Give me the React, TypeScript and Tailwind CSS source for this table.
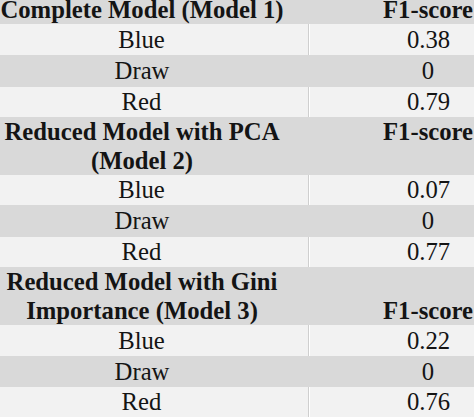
type Row = { label: string; score: string };

type Section = {
    title: string[];
    scoreAlign: 'top' | 'bottom';
    headerHeight: string;
    rows: Row[];
    rowHeights: string[];
};

const sections: Section[] = [
    {
        title: ['Complete Model (Model 1)'],
        scoreAlign: 'top',
        headerHeight: 'h-[24px] leading-[20px]',
        rows: [
            { label: 'Blue', score: '0.38' },
            { label: 'Draw', score: '0' },
            { label: 'Red', score: '0.79' },
        ],
        rowHeights: ['h-[31px]', 'h-[32px]', 'h-[30px]'],
    },
    {
        title: ['Reduced Model with PCA', '(Model 2)'],
        scoreAlign: 'top',
        headerHeight: 'h-[58px] leading-[29px]',
        rows: [
            { label: 'Blue', score: '0.07' },
            { label: 'Draw', score: '0' },
            { label: 'Red', score: '0.77' },
        ],
        rowHeights: ['h-[30px]', 'h-[32px]', 'h-[30px]'],
    },
    {
        title: ['Reduced Model with Gini', 'Importance (Model 3)'],
        scoreAlign: 'bottom',
        headerHeight: 'h-[58px] leading-[29px]',
        rows: [
            { label: 'Blue', score: '0.22' },
            { label: 'Draw', score: '0' },
            { label: 'Red', score: '0.76' },
        ],
        rowHeights: ['h-[31px]', 'h-[31px]', 'h-[30px]'],
    },
];

const App = () => {
    return (
        <div
            className="w-[474px] h-[417px] overflow-hidden bg-[#f2f2f2] text-[#141414] text-[24.7px]"
            style={{ fontFamily: '"Liberation Serif", "Times New Roman", serif' }}
        >
            <div className="-ml-[25px] w-[572px] flex flex-col">
                {sections.map((section, si) => (
                    <div key={si} className="flex flex-col">
                        {/* Header */}
                        <div className={`flex bg-[#d9d9d9] font-bold ${section.headerHeight}`}>
                            <div className="w-[334px] flex flex-col items-center text-center">
                                {section.title.map((line) => (
                                    <span key={line} className="whitespace-nowrap">{line}</span>
                                ))}
                            </div>
                            <div
                                className={`w-[238px] flex flex-col items-center ${
                                    section.scoreAlign === 'bottom' ? 'justify-end' : 'justify-start'
                                }`}
                            >
                                <span>F1-score</span>
                            </div>
                        </div>

                        {/* Rows */}
                        {section.rows.map((row, ri) => {
                            const dark = ri % 2 === 1;
                            return (
                                <div
                                    key={row.label}
                                    className={`flex ${section.rowHeights[ri]} ${
                                        dark ? 'bg-[#d9d9d9]' : 'bg-[#f2f2f2]'
                                    }`}
                                >
                                    <div
                                        className={`w-[334px] flex items-center justify-center ${
                                            dark ? '' : 'border-r border-[#cfcfcf]'
                                        }`}
                                    >
                                        {row.label}
                                    </div>
                                    <div
                                        className={`w-[238px] flex items-center justify-center ${
                                            dark ? '' : 'border-l border-white'
                                        }`}
                                    >
                                        {row.score}
                                    </div>
                                </div>
                            );
                        })}
                    </div>
                ))}
            </div>
        </div>
    );
};

export default App;
